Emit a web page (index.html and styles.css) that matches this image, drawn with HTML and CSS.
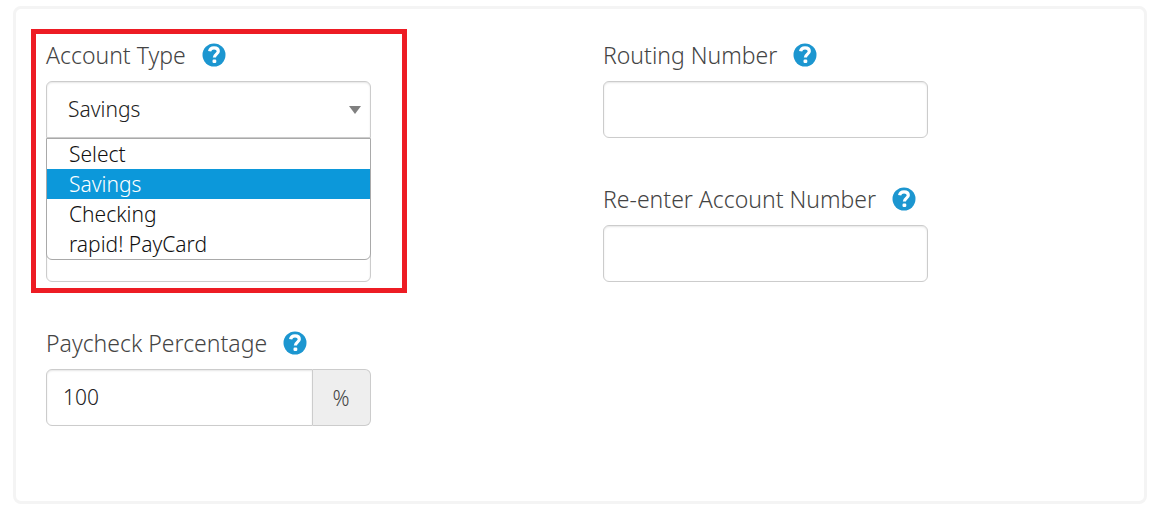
FILE: index.html
```html
<!DOCTYPE html>
<html lang="en">
<head>
  <meta charset="UTF-8" />
  <meta name="viewport" content="width=device-width, initial-scale=1.0" />
  <title>Direct Deposit</title>
  <link rel="stylesheet" href="styles.css">
</head>
<body>
  <svg class="sprite" aria-hidden="true">
    <symbol id="help" viewBox="0 0 24 24">
      <circle cx="12" cy="12" r="11.5" fill="#1c96d0" />
      <path d="M7.600 8.200C8 5.700 9.600 4.800 12 4.800c2.600 0 4.300 1.300 4.300 3.400 0 2.900-3.900 3-3.900 6.300" fill="none" stroke="#fff" stroke-width="3.200" />
      <rect x="10.500" y="16.500" width="3.800" height="3.400" rx="1.200" fill="#fff" />
    </symbol>
  </svg>

  <form class="panel">
    <div class="field">
      <div class="field-label">
        <label for="accountType">Account Type</label>
        <button type="button" class="help" aria-label="Help"><svg><use href="#help" /></svg></button>
      </div>
      <div class="select-wrap">
        <select id="accountType" class="control select">
          <option>Select</option>
          <option selected>Savings</option>
          <option>Checking</option>
          <option>rapid! PayCard</option>
        </select>
        <ul class="options" role="listbox" aria-label="Account Type">
          <li role="option">Select</li>
          <li role="option" class="active" aria-selected="true">Savings</li>
          <li role="option">Checking</li>
          <li role="option">rapid! PayCard</li>
        </ul>
      </div>
      <div class="highlight"></div>
    </div>

    <div class="field">
      <div class="field-label">
        <label for="routing">Routing Number</label>
        <button type="button" class="help" aria-label="Help"><svg><use href="#help" /></svg></button>
      </div>
      <input type="text" id="routing" class="control" />
    </div>

    <div class="field">
      <div class="field-label"></div>
      <input type="text" id="account" class="control" aria-label="Account Number" />
    </div>

    <div class="field">
      <div class="field-label">
        <label for="reenter">Re-enter Account Number</label>
        <button type="button" class="help" aria-label="Help"><svg><use href="#help" /></svg></button>
      </div>
      <input type="text" id="reenter" class="control" />
    </div>

    <div class="field">
      <div class="field-label">
        <label for="percentage">Paycheck Percentage</label>
        <button type="button" class="help" aria-label="Help"><svg><use href="#help" /></svg></button>
      </div>
      <div class="input-group">
        <input type="text" id="percentage" class="control" value="100" />
        <span class="addon">%</span>
      </div>
    </div>
  </form>
</body>
</html>
```
FILE: styles.css
```css
* {
  box-sizing: border-box;
}
body {
  margin: 6px 7px 3px 13px;
  background: #fff;
  color: #444;
  font-family: "Noto Sans", "Open Sans", sans-serif;
  font-weight: 300;
}
.sprite {
  display: none;
}
.panel {
  display: grid;
  grid-template-columns: 1fr 1fr;
  gap: 46px 16px;
  padding: 31px 0 75px 30px;
  border: 3px solid #f4f4f4;
  border-radius: 8px;
}
.field {
  position: relative;
  width: 60%;
}
.field-label {
  display: flex;
  align-items: center;
  gap: 16px;
  height: 30px;
  margin-bottom: 11px;
  font-size: 23px;
  line-height: 30px;
  white-space: nowrap;
}
.help {
  width: 24px;
  height: 24px;
  padding: 0;
  border: none;
  background: none;
  cursor: pointer;
}
.help svg {
  display: block;
  width: 24px;
  height: 24px;
}
.control {
  display: block;
  width: 100%;
  height: 57px;
  padding: 0 16px 2px;
  border: 1px solid #ccc;
  border-radius: 6px;
  background: #fff;
  box-shadow: inset 0 1px 2px rgba(0,0,0,0.1);
  color: #222;
  font-family: inherit;
  font-size: 21px;
  font-weight: 300;
}
.select-wrap {
  position: relative;
}
.select {
  appearance: none;
  padding: 0 21px 2px;
  border-radius: 6px 6px 0 0;
}
.select-wrap::after {
  content: "";
  position: absolute;
  top: 25px;
  right: 10px;
  border: 6px solid transparent;
  border-top: 8px solid #808080;
  border-bottom: none;
  pointer-events: none;
}
.options {
  position: absolute;
  top: 100%;
  left: 0;
  right: 0;
  z-index: 2;
  margin: 0;
  padding: 0;
  list-style: none;
  border: 1px solid #a9a9a9;
  border-radius: 0 0 6px 6px;
  background: #fff;
  color: #111;
  font-size: 21px;
  line-height: 30px;
}
.options li {
  padding: 0 22px;
}
.options .active {
  background: #0c98da;
  color: #fff;
}
.highlight {
  position: absolute;
  top: -11px;
  left: -15px;
  right: -36px;
  height: 264px;
  border: 5px solid #ed1c24;
  pointer-events: none;
  z-index: 3;
}
.input-group {
  display: flex;
}
.input-group .control {
  flex: 1;
  min-width: 0;
  border-radius: 6px 0 0 6px;
}
.addon {
  display: flex;
  align-items: center;
  justify-content: center;
  width: 58px;
  border: 1px solid #ccc;
  border-left: none;
  border-radius: 0 6px 6px 0;
  background: #eee;
  font-size: 21px;
}
```
